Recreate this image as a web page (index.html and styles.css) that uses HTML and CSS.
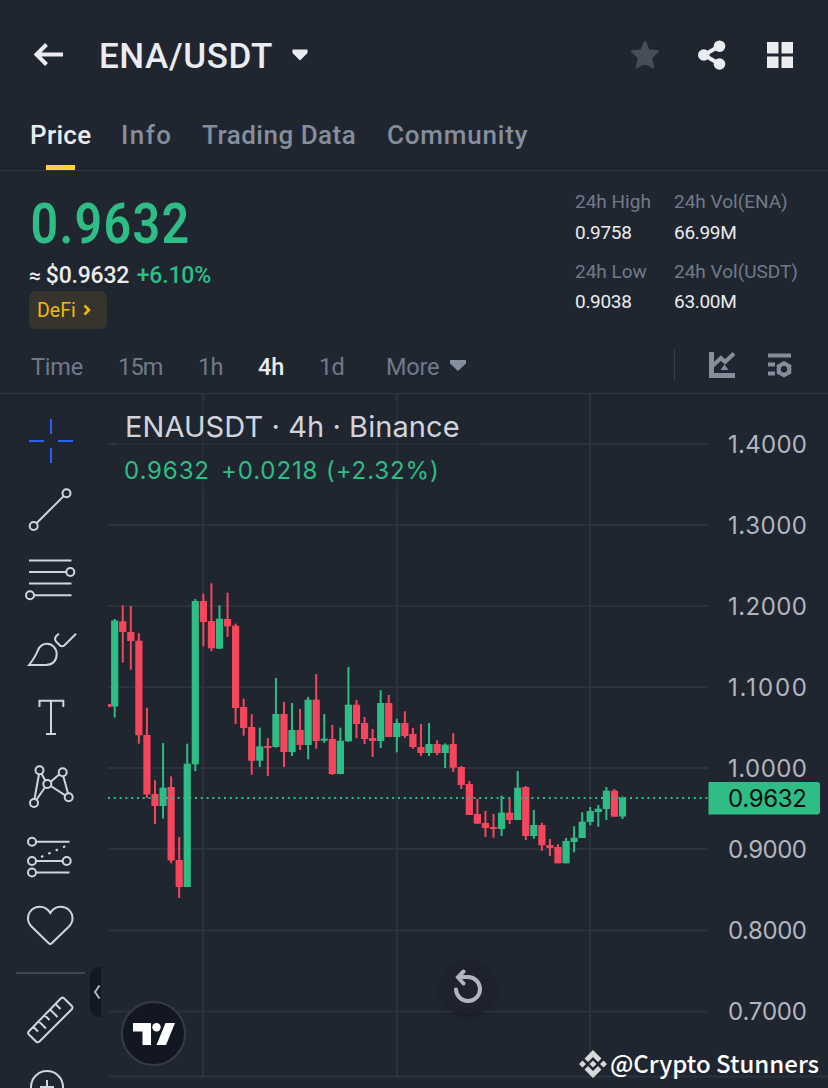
FILE: index.html
```html
<!DOCTYPE html>
<html lang="en">
<head>
  <meta charset="UTF-8" />
  <meta name="viewport" content="width=device-width, initial-scale=1.0"/>
  <title>ENA/USDT</title>
  <link rel="stylesheet" href="styles.css">
</head>
<body>
  <header class="header">
    <svg class="back" width="30" height="24" viewBox="0 0 30 24"><path d="M13.5 1.5L3.5 11.5L13.5 21.5M3.5 11.5H30" /></svg>
    <h1>ENA/USDT</h1>
    <svg class="caret" width="16" height="12" viewBox="0 0 16 12"><path d="M0.5 0.5H15.5V4L8 11.5L0.5 4Z" /></svg>
    <div class="header-actions">
      <svg width="30" height="30" viewBox="0 0 30 30"><path class="star" d="M15 2L18.7 10.3L28 11.3L21.2 17.6L23.3 27.5L15 22.8L6.7 27.5L8.8 17.6L2 11.3L11.3 10.3Z" /></svg>
      <svg width="30" height="30" viewBox="0 0 30 30"><path class="share-line" d="M21.5 6L6 15L21.5 24" /><g class="light"><circle cx="21.5" cy="6.2" r="5.8" /><circle cx="5.8" cy="15" r="5.8" /><circle cx="21.5" cy="24" r="5.8" /></g></svg>
      <svg width="30" height="30" viewBox="0 0 30 30"><path class="light" d="M2 2H13.5V13.5H2ZM16.5 2H28V13.5H16.5ZM2 16.5H13.5V28H2ZM16.5 16.5H28V28H16.5Z" /></svg>
    </div>
  </header>

  <nav class="tabs">
    <a class="active">Price</a>
    <a class="tab-info">Info</a>
    <a class="tab-data">Trading Data</a>
    <a class="tab-community">Community</a>
  </nav>

  <section class="summary">
    <div class="quote">
      <div class="last-price">0.9632</div>
      <div class="fiat"><span class="approx">≈ </span>$0.9632 <span class="up">+6.10%</span></div>
      <a class="tag">DeFi <svg width="8" height="12" viewBox="0 0 8 12"><path d="M1.5 1.5L6 6L1.5 10.5" /></svg></a>
    </div>
    <dl class="stats">
      <div><dt>24h High</dt><dd>0.9758</dd></div>
      <div><dt>24h Vol(ENA)</dt><dd>66.99M</dd></div>
      <div><dt>24h Low</dt><dd>0.9038</dd></div>
      <div><dt>24h Vol(USDT)</dt><dd>63.00M</dd></div>
    </dl>
  </section>

  <nav class="intervals">
    <a class="i-time">Time</a>
    <a class="i-15m">15m</a>
    <a class="i-1h">1h</a>
    <a class="i-4h active">4h</a>
    <a class="i-1d">1d</a>
    <a class="i-more">More</a>
    <svg class="more-caret" width="16" height="11" viewBox="0 0 16 11"><path d="M0 0H16V3.5L8 11L0 3.5Z" /></svg>
    <div class="interval-actions">
      <svg width="28" height="28" viewBox="0 0 28 28"><path d="M1 0H6V21H27V26H1Z" /><path class="zigzag" d="M5 13.5L13 6L17 10L26 1.5" /><path d="M16.5 12.5L20.5 18H12.5Z" /></svg>
      <svg width="28" height="28" viewBox="0 0 28 28"><path d="M2 1.5H25V5.5H2ZM2 10.5H9V14.5H2ZM2 19.5H9V23.5H2Z" /><path fill-rule="evenodd" d="M18 9L25.3 13V21.5L18 25.5L10.7 21.5V13ZM18 14A3.2 3.2 0 1 0 18 20.4A3.2 3.2 0 1 0 18 14Z" /></svg>
    </div>
  </nav>

  <main class="chart">
    <aside class="tools">
      <svg class="selected" viewBox="0 0 56 69"><path d="M28 12V27M28 41V56M6 34H21M35 34H50" /></svg>
      <svg viewBox="0 0 56 69"><circle cx="43.5" cy="17.3" r="4" /><circle cx="10.7" cy="50" r="4" /><path d="M40.7 20.1L13.5 47.2" /></svg>
      <svg viewBox="0 0 56 69"><path d="M6 15.5H48.5M6 27H43.3M6 38.5H48.5M11 50.3H48.5" /><circle cx="47.3" cy="27" r="4" /><circle cx="7" cy="50.3" r="4" /></svg>
      <svg viewBox="0 0 56 69"><path d="M6 51C12 43.5 13.5 40 15 36C17 31.5 20 29.7 24 29.7C29.5 29.7 33.7 34.5 33.7 40.3C33.7 46.5 29.5 51 23 51Z" /><path d="M36 19.7L33.5 21.7C31.5 23.8 31.7 26 33.5 28L36.5 31C38 32.5 40 32.5 41.5 31.2L53 19.7" /></svg>
      <svg viewBox="0 0 56 69"><path d="M16.5 24V17.8H40.3V24M28 17.8V51M23 51H33" /></svg>
      <svg viewBox="0 0 56 69"><path d="M16 22.3L11.5 47M18.5 21.7L22.3 28.5M13.5 47.8L22 35.3M27.7 29.8L36.2 22.5M27.8 34L42.2 43.3M40.3 24.3L45 41.3" /><circle cx="16.5" cy="18.3" r="4" /><circle cx="39.7" cy="20.3" r="4" /><circle cx="24.3" cy="32" r="4" /><circle cx="11" cy="51" r="4" /><circle cx="45.7" cy="45.3" r="4" /></svg>
      <svg viewBox="0 0 56 69"><path d="M13 20.7H46.5M13 40H39.7M13 51.5H46.5" /><path class="dotted" d="M18 36L44 24.5" /><circle cx="9" cy="20.7" r="4" /><circle cx="9" cy="40" r="4" /><circle cx="43.7" cy="40" r="4" /><circle cx="9" cy="51.5" r="4" /></svg>
      <svg viewBox="0 0 56 69"><path d="M27.3 23C24.5 18.5 21 16.7 17 16.7C10 16.7 5 22 5 28.5C5 32 6.5 34.5 9 37L25.5 53C26.8 54.3 27.8 54.3 29 53L45.5 37C48 34.5 49.5 32 49.5 28.5C49.5 22 44.5 16.7 37.5 16.7C33.5 16.7 30 18.5 27.3 23Z" /></svg>
      <hr>
      <svg viewBox="0 0 56 69"><path d="M5.7 45.5L38 12.2Q39.5 11 41 12.2L49 20.2Q50 21.5 49 23L16.5 55.5Q14.5 57 13 55.5L5.7 48.2Q4.5 47 5.7 45.5ZM10.5 41L15 45.5M16 35.5L23 42.5M22 29.5L26.5 34M27.5 24L34.5 31M33 18.5L37.5 23" /></svg>
      <svg viewBox="0 0 56 69"><circle cx="24" cy="32" r="16" /><path d="M24 25V39M17 32H31" /></svg>
    </aside>

    <div class="plot">
      <svg class="candles" width="720" height="694" viewBox="108 394 720 694">
        <path class="grid" d="M203 394V1076M397 394V1076M590 394V1076M108 444H708M108 525H708M108 606H708M108 687H708M108 768H708M108 849H708M108 930.5H708M108 1011.5H708M108 1076.5H828" />
        <g id="candles"><rect class="down" x="108" y="704" width="3" height="3" /></g>
        <path class="last-line" d="M108 798H708" />
        <g id="axis"></g>
        <path class="last-bg" d="M708.5 782H817Q820 782 820 785V811.5Q820 814.5 817 814.5H708.5Z" />
        <text class="last-text" x="728" y="806.5" textLength="79">0.9632</text>
      </svg>

      <div class="legend">
        <div class="legend-title">ENAUSDT · 4h · Binance</div>
        <div class="legend-values"><span>0.9632</span><span>+0.0218 (+2.32%)</span></div>
      </div>

      <button class="tv-logo" aria-label="TradingView">
        <svg width="42" height="22" viewBox="0 0 42 22"><path d="M0 0H18V22H9.5V8.5H0ZM32.5 0H42L33 22H23.5Z" /><circle cx="23.5" cy="4.2" r="4.2" /></svg>
      </button>
      <button class="reset" aria-label="Reset chart">
        <svg width="32" height="36" viewBox="0 0 32 36"><path d="M4 20.5A12 12 0 1 0 16 8H6M11.5 2.5L6 8.3L11.5 14.5" /></svg>
      </button>
    </div>

    <button class="collapse" aria-label="Hide toolbar"><svg width="8" height="16" viewBox="0 0 8 16"><path d="M6.5 1.5L2 8L6.5 14.5" /></svg></button>

    <div class="signature">
      <svg width="28" height="28" viewBox="0 0 28 28"><path d="M14 0L22.5 8.5L19 12L14 7L9 12L5.5 8.5ZM5.5 19.5L9 16L14 21L19 16L22.5 19.5L14 28ZM0 14L3.5 10.5L7 14L3.5 17.5ZM21 14L24.5 10.5L28 14L24.5 17.5ZM10.5 14L14 10.5L17.5 14L14 17.5Z" /></svg>
      <span>@Crypto Stunners</span>
    </div>
  </main>

  <script>
    // direction, high, low, body top, body bottom (chart units)
    const candles = [
      ['up', 619, 717.5, 620.5, 706.5], ['down', 605.5, 662.5, 621.3, 632], ['down', 606, 669.7, 632, 641],
      ['down', 633.3, 743.7, 640.7, 735.3], ['down', 707.7, 798, 735, 794.5], ['down', 780.3, 824, 794, 806],
      ['up', 743, 818.5, 787.7, 806], ['down', 776.3, 863.3, 787, 860.5], ['down', 837, 898, 860, 887],
      ['up', 743.7, 887, 763.7, 887], ['up', 599, 771.3, 601, 764.3], ['down', 593.7, 646.3, 601, 622],
      ['down', 583.3, 651.3, 621, 648.3], ['up', 605.3, 648.7, 618.7, 648.7], ['down', 592.7, 637, 619, 626.3],
      ['down', 623.7, 724, 625.7, 708], ['down', 698.7, 735.7, 707, 728], ['down', 714.3, 774.7, 727, 760.7],
      ['up', 727.7, 767, 746.3, 760.7], ['down', 738, 776, 746, 748], ['up', 678, 747.7, 714, 747],
      ['down', 702, 767, 714, 752], ['up', 703, 756, 730, 752], ['down', 709, 750, 730, 745],
      ['up', 697, 759.3, 699.7, 745], ['down', 674, 748.7, 699.7, 741], ['up', 714, 743, 738.7, 740.7],
      ['down', 725, 775, 739, 774], ['up', 727.7, 774.3, 740.7, 774], ['up', 667, 742, 704.7, 741.3],
      ['down', 700, 738.3, 704.7, 724], ['down', 717, 744, 723, 739], ['down', 729, 757, 738, 741],
      ['up', 690.3, 748, 703, 741], ['down', 695, 737, 703, 737], ['up', 718.7, 752.3, 723, 737],
      ['down', 711.3, 738, 723, 736], ['down', 728, 748.7, 734, 747], ['down', 724, 756, 747, 753],
      ['up', 723, 756, 744, 753], ['down', 740.3, 755.3, 744, 753], ['up', 743.5, 768, 744.7, 753],
      ['down', 733.3, 772, 744, 767.7], ['down', 766, 789, 767, 785], ['down', 781, 815, 784, 815],
      ['down', 798.7, 823.7, 814, 823.7], ['down', 811, 837, 823, 828], ['down', 814, 837.7, 827, 829],
      ['up', 795.7, 836, 812.7, 829], ['down', 798.7, 824, 812.7, 820], ['up', 771, 820, 787.7, 820],
      ['down', 786, 840, 787, 836], ['up', 810, 838.7, 825, 836], ['down', 822.7, 850.7, 825, 845.3],
      ['down', 839, 856, 845, 848], ['down', 844.3, 863.3, 847, 863.3], ['up', 838, 863.3, 841, 863.3],
      ['up', 826.3, 852.3, 837.7, 842], ['up', 812.3, 838, 821.7, 838], ['up', 807, 825.3, 811, 822],
      ['up', 805, 826.7, 808.7, 812], ['up', 787, 820, 790.7, 809], ['down', 789, 816.7, 790.7, 816.7],
      ['up', 796.3, 819, 798, 816.5]
    ];

    let bars = '';
    candles.forEach(([dir, high, low, top, bottom], i) => {
      const x = 114.7 + i * 8.06;
      bars += `<rect class="${dir}" x="${x - 1}" y="${high}" width="2" height="${low - high}" />`;
      bars += `<rect class="${dir}" x="${x - 3.6}" y="${top}" width="7.2" height="${bottom - top}" />`;
    });
    document.getElementById('candles').innerHTML += bars;

    const prices = ['1.4000', '1.3000', '1.2000', '1.1000', '1.0000', '0.9000', '0.8000', '0.7000'];
    document.getElementById('axis').innerHTML = prices
      .map((p, i) => `<text x="728" y="${452.5 + i * 81.07}" textLength="79">${p}</text>`)
      .join('');
  </script>
</body>
</html>
```
FILE: styles.css
```css
* {
  box-sizing: border-box;
}

body {
  margin: 0;
  width: 828px;
  height: 1088px;
  overflow: hidden;
  background: #202630;
  color: #eaecef;
  font-family: Roboto, sans-serif;
}

svg {
  display: block;
  flex: none;
}

button {
  border: none;
  padding: 0;
}

.header {
  display: flex;
  align-items: center;
  height: 110px;
  padding: 0 33px;
}

.back {
  fill: none;
  stroke: #eaecef;
  stroke-width: 4;
  margin-top: -1px;
}

h1 {
  margin: 3px 20px 0 36px;
  width: 173px;
  font-size: 35px;
  font-weight: 500;
  letter-spacing: 0.6px;
  white-space: nowrap;
}

.caret,
.light {
  fill: #eaecef;
}

.header-actions {
  display: flex;
  gap: 37.5px;
  margin-left: auto;
}

.star {
  fill: #474d57;
  stroke: #474d57;
  stroke-width: 2;
  stroke-linejoin: round;
}

.share-line {
  fill: none;
  stroke: #eaecef;
  stroke-width: 4;
}

.tabs {
  display: flex;
  gap: 30px;
  height: 61px;
  padding-left: 30px;
  border-bottom: 1px solid #2f3640;
  color: #848e9c;
  font-size: 26px;
  font-weight: 500;
  line-height: 51px;
  letter-spacing: 0.5px;
  white-space: nowrap;
}

.tabs .active {
  position: relative;
  width: 61px;
  color: #eaecef;
  letter-spacing: 0.3px;
}

.tabs .active::after {
  content: "";
  position: absolute;
  left: 16px;
  bottom: 0;
  width: 29px;
  height: 5px;
  background: #fcd535;
}

.tabs .tab-info {
  width: 51px;
  letter-spacing: 1.4px;
}

.tab-data {
  width: 155px;
}

.tabs .tab-community {
  letter-spacing: 0.8px;
}

.summary {
  display: flex;
  justify-content: space-between;
  height: 167px;
  padding: 18px 30px 0 29px;
}

.last-price {
  height: 70px;
  font-size: 55px;
  font-weight: 600;
  line-height: 70px;
  letter-spacing: 1.5px;
  color: #2ebd85;
  transform: scaleX(0.88);
  transform-origin: 12px 50%;
}

.fiat {
  height: 32px;
  font-size: 23px;
  font-weight: 500;
  line-height: 33px;
  letter-spacing: -0.2px;
}

.approx {
  font-size: 21px;
}

.up {
  fill: #2ebd85;
  color: #2ebd85;
  margin-left: 2px;
}

.tag {
  display: flex;
  align-items: center;
  gap: 7px;
  width: 78px;
  height: 38px;
  padding-left: 8px;
  border-radius: 7px;
  background: #36342d;
  color: #f0b90b;
  font-size: 19.5px;
}

.tag svg {
  fill: none;
  stroke: #f0b90b;
  stroke-width: 2.5;
}

.stats {
  display: grid;
  grid-template-columns: 99px 124px;
  grid-auto-rows: 69.5px;
  margin: 0;
  white-space: nowrap;
}

.stats dt {
  font-size: 19px;
  line-height: 26px;
  color: #707a8a;
}

.stats dd {
  margin: 4.5px 0 0;
  font-size: 19px;
  line-height: 26px;
  letter-spacing: -0.3px;
}

.intervals {
  display: flex;
  align-items: center;
  height: 56px;
  padding: 0 34px 0 31px;
  border-bottom: 1px solid #2f3640;
  font-size: 23.5px;
  letter-spacing: -0.2px;
  color: #707a8a;
}

.intervals a {
  flex: none;
  padding-top: 2px;
  white-space: nowrap;
}

.intervals .active {
  color: #eaecef;
  font-weight: 500;
}

.i-time {
  width: 87px;
}

.i-15m {
  width: 80px;
  letter-spacing: -0.8px;
}

.i-1h {
  width: 60px;
  letter-spacing: -0.8px;
}

.i-4h {
  width: 61px;
}

.i-1d {
  width: 67px;
  letter-spacing: -0.8px;
}

.i-more {
  width: 64px;
}

.more-caret,
.interval-actions {
  fill: #848e9c;
}

.interval-actions {
  display: flex;
  align-items: center;
  gap: 30px;
  height: 31px;
  margin-left: auto;
  padding-left: 33px;
  border-left: 1px solid #373e48;
}

.zigzag {
  fill: none;
  stroke: #848e9c;
  stroke-width: 4;
}

.chart {
  position: relative;
  display: flex;
  height: 694px;
}

.tools {
  width: 108px;
  padding: 13px 0 0 23px;
}

.tools svg {
  width: 56px;
  height: 69px;
  fill: none;
  stroke: #d1d4dc;
  stroke-width: 2;
}

.tools .selected {
  stroke: #2962ff;
}

.dotted {
  stroke-dasharray: 2.5 5.5;
}

.tools hr {
  width: 69px;
  height: 2px;
  margin: 13px 0 12px -7px;
  border: none;
  background: #434651;
}

.plot {
  position: relative;
  width: 720px;
}

.candles {
  font-family: Inter, sans-serif;
  font-size: 24px;
}

.grid {
  fill: none;
  stroke: #2c323c;
  stroke-width: 2;
}

.down {
  fill: #f6465d;
}

.last-line {
  stroke: #2ebd85;
  stroke-width: 2;
  stroke-dasharray: 2 3.8;
}

.candles text {
  fill: #b2b5be;
}

.last-bg {
  fill: #2ebd85;
}

.candles .last-text {
  fill: #0c0e12;
}

.legend {
  position: absolute;
  top: 8px;
  left: 8px;
  width: 363px;
  height: 89px;
  padding: 3px 8px;
  background: rgba(32, 38, 48, 0.5);
  font-family: Inter, sans-serif;
  white-space: nowrap;
}

.legend-title {
  height: 43px;
  padding-left: 1px;
  font-size: 29px;
  line-height: 44px;
  letter-spacing: 0.08px;
  color: #d1d4dc;
}

.legend-values {
  display: flex;
  gap: 11px;
  height: 42px;
  font-size: 24px;
  line-height: 45px;
  letter-spacing: 0.9px;
  color: #2ebd85;
}

.tv-logo {
  position: absolute;
  left: 13px;
  top: 607px;
  display: grid;
  place-items: center;
  width: 65px;
  height: 65px;
  border: 2px solid #363a45;
  border-radius: 50%;
  background: #131722;
  fill: #fff;
}

.reset {
  position: absolute;
  left: 333px;
  top: 566px;
  display: grid;
  place-items: center;
  width: 54px;
  height: 54px;
  border-radius: 50%;
  background: #1e222d;
  box-shadow: 0 3px 6px rgba(0, 0, 0, 0.3);
}

.reset svg {
  fill: none;
  stroke: #b2b5be;
  stroke-width: 4;
  stroke-linecap: round;
}

.collapse {
  position: absolute;
  left: 90px;
  top: 573px;
  display: flex;
  align-items: center;
  justify-content: flex-end;
  width: 11px;
  height: 50px;
  border-radius: 9px 0 0 9px;
  background: #131722;
}

.collapse svg {
  fill: none;
  stroke: #b2b5be;
  stroke-width: 2;
}

.signature {
  position: absolute;
  left: 579px;
  top: 652px;
  display: flex;
  align-items: center;
  gap: 3px;
  height: 36px;
  font-family: "Noto Sans CJK SC", sans-serif;
  font-size: 24px;
  font-weight: 500;
  color: #fff;
  fill: #d8d9db;
  white-space: nowrap;
}

.signature span {
  margin-top: -3px;
}
```
